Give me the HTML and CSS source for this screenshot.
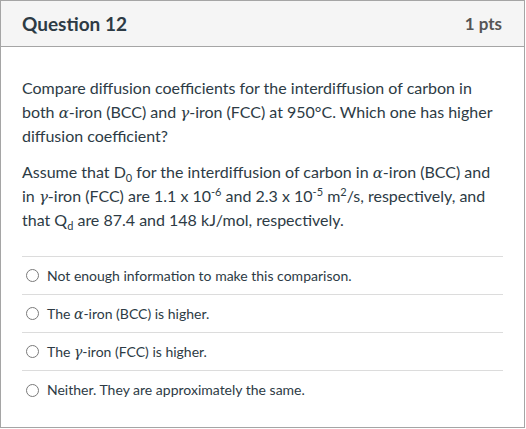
FILE: index.html
```html
<!DOCTYPE html>
<html>
<head>
<meta charset="utf-8">
<link rel="stylesheet" href="styles.css">
</head>
<body>
<div class="card">
  <div class="header">
    <div class="title">Question 12</div>
    <div class="pts">1 pts</div>
  </div>
  <div class="body">
    <p class="para">Compare diffusion coefficients for the interdiffusion of carbon in both <span class="m">α</span>-iron (BCC) and <span class="m">γ</span>-iron (FCC) at 950°C. Which one has higher diffusion coefficient?</p>
    <p class="para">Assume that D<sub>0</sub> for the interdiffusion of carbon in <span class="m">α</span>-iron (BCC) and in <span class="m">γ</span>-iron (FCC) are 1.1 x 10<sup>-6</sup> and 2.3 x 10<sup>-5</sup> m<sup>2</sup>/s, respectively, and that Q<sub>d</sub> are 87.4 and 148 kJ/mol, respectively.</p>
    <div class="answers">
      <div class="answer"><span class="radio"></span><span>Not enough information to make this comparison.</span></div>
      <div class="answer"><span class="radio"></span><span>The <span class="m">α</span>-iron (BCC) is higher.</span></div>
      <div class="answer"><span class="radio"></span><span>The <span class="m">γ</span>-iron (FCC) is higher.</span></div>
      <div class="answer"><span class="radio"></span><span>Neither. They are approximately the same.</span></div>
    </div>
  </div>
</div>
</body>
</html>
```
FILE: styles.css
```css
html, body {
  margin: 0;
  padding: 0;
  background: #fff;
}
body {
  font-family: Lato, "Liberation Sans", sans-serif;
  color: #2d3b45;
}
.card {
  width: 525px;
  height: 428px;
  box-sizing: border-box;
  border: 1px solid #a5a5a5;
  display: flex;
  flex-direction: column;
}
.header {
  height: 46px;
  box-sizing: border-box;
  background: #f5f5f5;
  border-bottom: 1px solid #a5a5a5;
  display: flex;
  align-items: center;
  justify-content: space-between;
  padding: 0 22px 0 21px;
}
.title {
  font-size: 19px;
  font-weight: 700;
  color: #2d3b45;
}
.pts {
  font-size: 17px;
  font-weight: 700;
  color: #555;
}
.body {
  padding: 29px 21px 0 21px;
}
.para {
  margin: 0 0 12px 0;
  font-size: 16px;
  line-height: 24px;
}
.m {
  font-family: "DejaVu Serif", "Liberation Serif", serif;
  font-style: italic;
  font-size: 15px;
  line-height: 0;
}
sub, sup {
  font-size: 11px;
  line-height: 0;
}
.answers {
  margin-top: 24px;
  border-top: 1px solid #dcdcdc;
}
.answer {
  height: 38px;
  box-sizing: border-box;
  border-bottom: 1px solid #dcdcdc;
  display: flex;
  align-items: center;
  padding-left: 4px;
  font-size: 14px;
  line-height: 18px;
  gap: 8px;
}
.answer:last-child {
  border-bottom: none;
}
.answer .m {
  font-size: 14px;
}
.radio {
  width: 13px;
  height: 13px;
  border: 1px solid #7a7a7a;
  border-radius: 50%;
  box-sizing: border-box;
  flex: none;
}
```
